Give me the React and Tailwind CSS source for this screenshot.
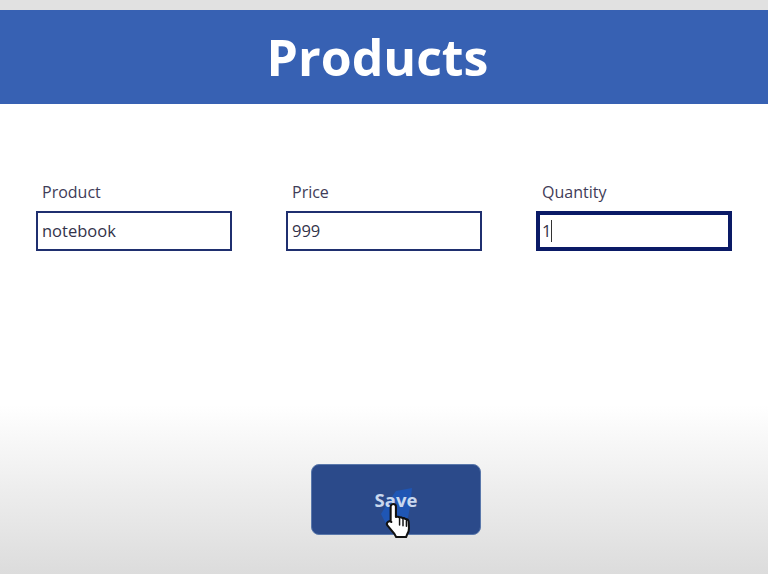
function Field({ label, value, focused }) {
  return (
    <div className="flex w-[196px] flex-col">
      <label className="h-[30px] pl-[6px] text-[16px] leading-[23px] text-[#3f3c58]">{label}</label>
      <div className={`flex h-[40px] items-center bg-white text-[16.5px] text-[#33334a] ${focused ? "border-[4px] border-[#0a1a66] pl-[2px]" : "border-2 border-[#1f2f6f] pl-[4px]"}`}>
        <span>{value}</span>
        {focused && <span className="h-[22px] w-px bg-[#333]" />}
      </div>
    </div>
  );
}

export default function App() {
  return (
    <div className="flex h-[574px] w-[768px] flex-col overflow-hidden bg-white font-['Open_Sans',sans-serif]">
      <div className="h-[10px] bg-[#e1e1e1]" />
      <header className="flex h-[94px] items-center justify-center bg-[#3761b3] pr-[13px]">
        <h1 className="text-[50px] leading-none font-bold text-white">Products</h1>
      </header>
      <main className="flex flex-1 flex-col bg-gradient-to-b from-white from-[64%] to-[#dcdcdc]">
        <div className="mt-[77px] flex gap-[54px] pl-[36px]">
          <Field label="Product" value="notebook" />
          <Field label="Price" value="999" />
          <Field label="Quantity" value="1" focused />
        </div>
        <div className="mt-[213px] flex justify-center pl-[24px]">
          <button className="relative flex h-[71px] w-[170px] items-center justify-center rounded-[8px] border border-[#5a78ab] bg-[#2b4a8a] pt-[1px] text-[18.500px] font-bold text-[#c9d8ee]">
            <svg className="absolute top-[22px] left-[69px]" width="32" height="42" viewBox="0 0 32 42">
              <path d="M31 1 L15 4 L8 14 L0 27 L7 41 L25 41 L29 20 Z" fill="#1f56b4" />
            </svg>
            <span className="relative">Save</span>
            <svg className="absolute top-[36px] left-[71px]" width="32" height="39" viewBox="0 0 28 34">
              <path
                d="M9 2.5c1.3 0 2.3 1 2.3 2.3V14l1.2-.2c.8-.1 1.5.1 2 .5.9-.3 1.9-.1 2.5.6 1-.3 2 0 2.6.8 1.4-.2 2.7.8 2.8 2.3l.3 5.500c.1 2.200-.4 4-1.500 5.500l-1 2.500H11.500l-1.500-2.800L4 21.500c-.8-1-.7-2.400.2-3.200.9-.8 2.200-.8 3.100 0l-.6-.5V4.800C6.700 3.500 7.700 2.500 9 2.500Z"
                fill="#fff"
                stroke="#111"
                strokeWidth="1.800"
                strokeLinejoin="round"
              />
              <path d="M14.500 15v6M17.500 16v5.500M20.500 17v5" stroke="#111" strokeWidth="1.300" strokeLinecap="round" />
            </svg>
          </button>
        </div>
      </main>
    </div>
  );
}
